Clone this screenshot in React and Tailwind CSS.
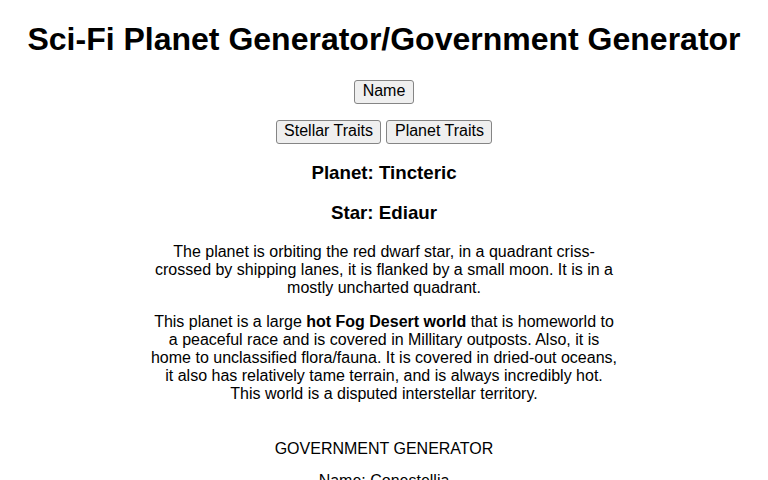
import React from 'react';

const btn =
  'h-[24px] px-[7.5px] border border-[#858585] rounded-[3px] bg-[#efefef] text-[16px] leading-[1.15] text-black';

const App = () => {
  return (
    <div className="min-h-screen bg-white text-black font-['Liberation_Sans',Arial,sans-serif] text-[16px] leading-[1.15] text-center">
      <h1 className="pt-[21.44px] mb-[21.44px] text-[32px] font-bold">
        Sci-Fi Planet Generator/Government Generator
      </h1>

      <div className="mb-[16px] flex justify-center">
        <button className={btn}>Name</button>
      </div>

      <div className="flex justify-center gap-[5px]">
        <button className={btn}>Stellar Traits</button>
        <button className={btn}>Planet Traits</button>
      </div>

      <h3 className="mt-[18.3px] text-[18.72px] font-bold">Planet: Tincteric</h3>
      <h3 className="mt-[18.5px] text-[18.72px] font-bold">Star: Ediaur</h3>

      <div className="w-[468px] mx-auto leading-[18px]">
        <p className="mt-[19px]">
          The planet is orbiting the red dwarf star, in a quadrant criss-crossed by shipping lanes, it is
          flanked by a small moon. It is in a mostly uncharted quadrant.
        </p>
        <p className="mt-[16px]">
          This planet is a large <b>hot Fog Desert world</b> that is homeworld to a peaceful race and is
          covered in Millitary outposts. Also, it is home to unclassified flora/fauna. It is covered in
          dried-out oceans, it also has relatively tame terrain, and is always incredibly hot. This world is
          a disputed interstellar territory.
        </p>
      </div>

      <p className="mt-[37.5px]">GOVERNMENT GENERATOR</p>
      <p className="mt-[14px] pb-[16px]">Name: Conestellia</p>
    </div>
  );
};

export default App;
